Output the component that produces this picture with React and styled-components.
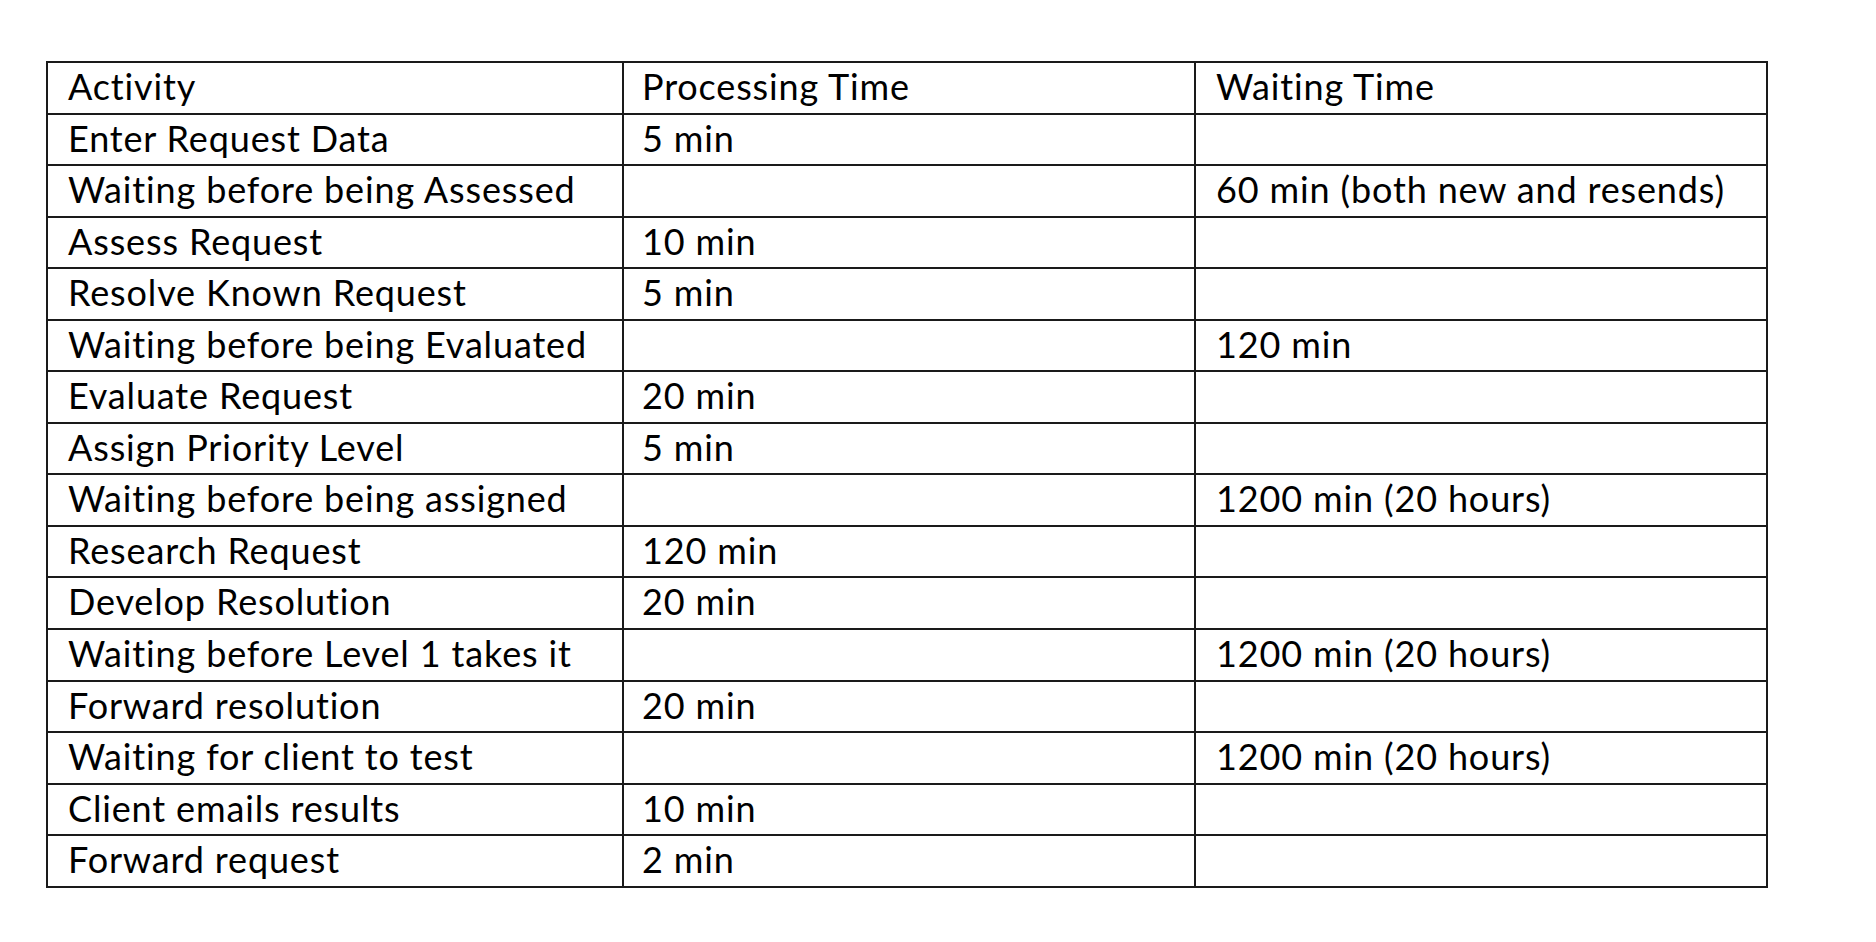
import React from 'react';
import styled, { createGlobalStyle } from 'styled-components';

const Global = createGlobalStyle`
  html, body {
    margin: 0;
    padding: 0;
    background: #ffffff;
  }
`;

const Page = styled.div`
  padding: 61px 0 0 46px;
  font-family: Lato, "Liberation Sans", sans-serif;
  color: #000;
`;

const Grid = styled.div`
  display: grid;
  grid-template-columns: 576px 572px 572px;
  grid-auto-rows: 51.56px;
  width: max-content;
  border-top: 2px solid #1a1a1a;
  border-left: 2px solid #1a1a1a;
`;

const Cell = styled.div`
  box-sizing: border-box;
  border-right: 2px solid #1a1a1a;
  border-bottom: 2px solid #1a1a1a;
  padding: 2px 0 0 ${(p) => p.$pad}px;
  font-size: 36px;
  letter-spacing: 0.85px;
  line-height: 42px;
  white-space: nowrap;
`;

const rows = [
  ['Activity', 'Processing Time', 'Waiting Time'],
  ['Enter Request Data', '5 min', ''],
  ['Waiting before being Assessed', '', '60 min (both new and resends)'],
  ['Assess Request', '10 min', ''],
  ['Resolve Known Request', '5 min', ''],
  ['Waiting before being Evaluated', '', '120 min'],
  ['Evaluate Request', '20 min', ''],
  ['Assign Priority Level', '5 min', ''],
  ['Waiting before being assigned', '', '1200 min (20 hours)'],
  ['Research Request', '120 min', ''],
  ['Develop Resolution', '20 min', ''],
  ['Waiting before Level 1 takes it', '', '1200 min (20 hours)'],
  ['Forward resolution', '20 min', ''],
  ['Waiting for client to test', '', '1200 min (20 hours)'],
  ['Client emails results', '10 min', ''],
  ['Forward request', '2 min', ''],
];

const pads = [20, 18, 20];

export default function App() {
  return (
    <Page>
      <Global />
      <Grid>
        {rows.map((r, i) =>
          r.map((text, j) => (
            <Cell key={i + '-' + j} $pad={pads[j]}>
              {text}
            </Cell>
          ))
        )}
      </Grid>
    </Page>
  );
}
